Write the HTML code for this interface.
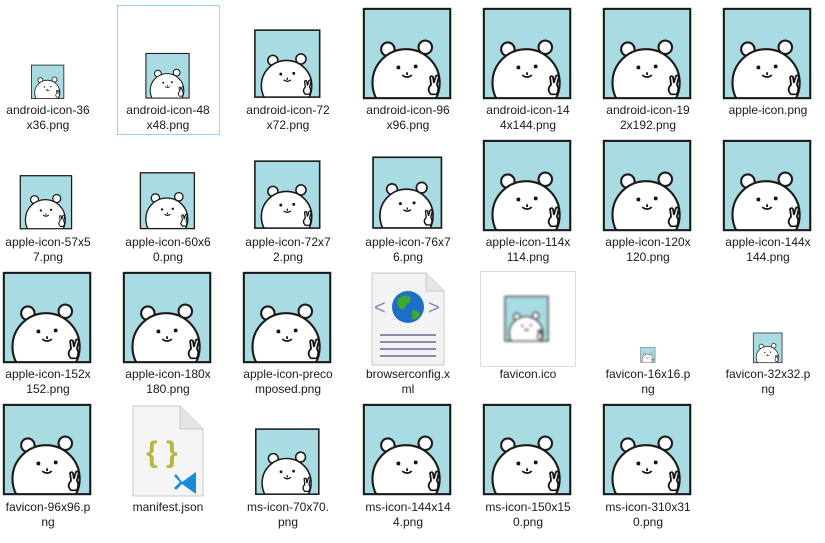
<!DOCTYPE html>
<html><head><meta charset="utf-8"><style>
html,body{margin:0;padding:0;background:#fff;width:825px;height:543px;overflow:hidden;position:relative;font-family:"Liberation Sans",sans-serif;}
.i{position:absolute;}
.l{position:absolute;width:110px;text-align:center;font-size:12px;line-height:15px;color:#1a1a1a;}
.sel{position:absolute;left:117px;top:5px;width:103px;height:130px;border:1px solid #99d1ff;box-sizing:border-box;}
</style></head><body>
<svg width="0" height="0" style="position:absolute">
<defs>
<clipPath id="cp"><rect x="4" y="3" width="90" height="93"/></clipPath>
<symbol id="b" viewBox="0 0 100 100">
<rect x="4" y="3" width="90" height="93" fill="#a8dbe2"/>
<g clip-path="url(#cp)" stroke="#1a1a1a" stroke-width="2.2" fill="#fff">
<circle cx="29" cy="45" r="7"/><circle cx="68" cy="43" r="7"/>
<ellipse cx="48" cy="80" rx="35" ry="35"/>
</g>
<circle cx="40" cy="64" r="2" fill="#111"/><circle cx="58" cy="63" r="2" fill="#111"/>
<path d="M44 72 q5 4 10 0 M49 69 v3" stroke="#111" stroke-width="1.8" fill="none"/>
<path d="M74 92 q-5 -5 0 -10 l-1 -8 q2 -2 3 0 l1 6 l2 -7 q2 -2 3 1 l-2 8 q3 4 0 10 z" fill="#fff" stroke="#111" stroke-width="1.8"/>
<rect x="4" y="3" width="90" height="93" fill="none" stroke="#1a1a1a" stroke-width="2.2"/>
</symbol>
</defs></svg>
<div class="sel"></div>

<!-- row 1 -->
<svg class="i" style="left:30px;top:64px" width="36" height="36"><use href="#b"/></svg>
<svg class="i" style="left:144px;top:52px" width="48" height="48"><use href="#b"/></svg>
<svg class="i" style="left:252px;top:28px" width="72" height="72"><use href="#b"/></svg>
<svg class="i" style="left:360px;top:6px" width="96" height="96"><use href="#b"/></svg>
<svg class="i" style="left:480px;top:6px" width="96" height="96"><use href="#b"/></svg>
<svg class="i" style="left:600px;top:6px" width="96" height="96"><use href="#b"/></svg>
<svg class="i" style="left:720px;top:6px" width="96" height="96"><use href="#b"/></svg>
<div class="l" style="left:-7px;top:103px">android-icon-36<br>x36.png</div>
<div class="l" style="left:113px;top:103px">android-icon-48<br>x48.png</div>
<div class="l" style="left:233px;top:103px">android-icon-72<br>x72.png</div>
<div class="l" style="left:353px;top:103px">android-icon-96<br>x96.png</div>
<div class="l" style="left:473px;top:103px">android-icon-14<br>4x144.png</div>
<div class="l" style="left:593px;top:103px">android-icon-19<br>2x192.png</div>
<div class="l" style="left:713px;top:103px">apple-icon.png</div>

<!-- row 2 -->
<svg class="i" style="left:18px;top:174px" width="57" height="57"><use href="#b"/></svg>
<svg class="i" style="left:138px;top:171px" width="60" height="60"><use href="#b"/></svg>
<svg class="i" style="left:252px;top:159px" width="72" height="72"><use href="#b"/></svg>
<svg class="i" style="left:370px;top:155px" width="76" height="76"><use href="#b"/></svg>
<svg class="i" style="left:480px;top:138px" width="96" height="96"><use href="#b"/></svg>
<svg class="i" style="left:600px;top:138px" width="96" height="96"><use href="#b"/></svg>
<svg class="i" style="left:720px;top:138px" width="96" height="96"><use href="#b"/></svg>
<div class="l" style="left:-7px;top:235px">apple-icon-57x5<br>7.png</div>
<div class="l" style="left:113px;top:235px">apple-icon-60x6<br>0.png</div>
<div class="l" style="left:233px;top:235px">apple-icon-72x7<br>2.png</div>
<div class="l" style="left:353px;top:235px">apple-icon-76x7<br>6.png</div>
<div class="l" style="left:473px;top:235px">apple-icon-114x<br>114.png</div>
<div class="l" style="left:593px;top:235px">apple-icon-120x<br>120.png</div>
<div class="l" style="left:713px;top:235px">apple-icon-144x<br>144.png</div>

<!-- row 3 -->
<svg class="i" style="left:0px;top:270px" width="96" height="96"><use href="#b"/></svg>
<svg class="i" style="left:120px;top:270px" width="96" height="96"><use href="#b"/></svg>
<svg class="i" style="left:240px;top:270px" width="96" height="96"><use href="#b"/></svg>
<svg class="i" style="left:368px;top:271px" width="80" height="96" viewBox="0 0 80 96">
<path d="M4 2 H58 L76 20 V94 H4 Z" fill="#f3f3f3" stroke="#c8c8c8"/>
<path d="M58 2 V20 H76" fill="#e6e6e6" stroke="#c8c8c8"/>
<text x="6" y="43" font-size="20" fill="#8c86b0" font-family="Liberation Sans">&lt;</text>
<text x="60" y="43" font-size="20" fill="#8c86b0" font-family="Liberation Sans">&gt;</text>
<circle cx="40" cy="36" r="16" fill="#1f6fc9"/>
<path d="M30 28 q6 -6 12 -2 q2 6 -4 8 q-2 6 -6 4 q-4 -4 -2 -10 z M44 40 q6 -2 8 4 q-4 6 -8 4 z" fill="#3fa832"/>
<path d="M12 64 H68 M12 71 H68 M12 78 H68 M12 85 H68" stroke="#8e89a8" stroke-width="2"/>
</svg>
<div class="i" style="left:480px;top:271px;width:96px;height:96px;border:1px solid #ddd;box-sizing:border-box;background:#fff"></div>
<svg class="i" style="left:503px;top:295px;filter:blur(1.2px)" width="48" height="48"><use href="#b"/></svg>
<svg class="i" style="left:640px;top:347px" width="16" height="16"><use href="#b"/></svg>
<svg class="i" style="left:752px;top:332px" width="32" height="32"><use href="#b"/></svg>
<div class="l" style="left:-7px;top:367px">apple-icon-152x<br>152.png</div>
<div class="l" style="left:113px;top:367px">apple-icon-180x<br>180.png</div>
<div class="l" style="left:233px;top:367px">apple-icon-preco<br>mposed.png</div>
<div class="l" style="left:353px;top:367px">browserconfig.x<br>ml</div>
<div class="l" style="left:473px;top:367px">favicon.ico</div>
<div class="l" style="left:593px;top:367px">favicon-16x16.p<br>ng</div>
<div class="l" style="left:713px;top:367px">favicon-32x32.p<br>ng</div>

<!-- row 4 -->
<svg class="i" style="left:0px;top:402px" width="96" height="96"><use href="#b"/></svg>
<svg class="i" style="left:130px;top:404px" width="76" height="94" viewBox="0 0 76 94">
<path d="M3 2 H50 L73 25 V92 H3 Z" fill="#f5f5f5" stroke="#c8c8c8"/>
<path d="M50 2 V25 H73" fill="#e4e4e4" stroke="#c8c8c8"/>
<text x="16" y="58" font-size="30" font-weight="bold" fill="#b5b840" font-family="Liberation Sans">{ }</text>
<path d="M52 78 L66 68 V90 L52 80 L46 86 L44 84 L50 78 L44 72 L46 70 Z" fill="#1a8ad8"/>
</svg>
<svg class="i" style="left:253px;top:427px" width="70" height="70"><use href="#b"/></svg>
<svg class="i" style="left:360px;top:402px" width="96" height="96"><use href="#b"/></svg>
<svg class="i" style="left:480px;top:402px" width="96" height="96"><use href="#b"/></svg>
<svg class="i" style="left:600px;top:402px" width="96" height="96"><use href="#b"/></svg>
<div class="l" style="left:-7px;top:500px">favicon-96x96.p<br>ng</div>
<div class="l" style="left:113px;top:500px">manifest.json</div>
<div class="l" style="left:233px;top:500px">ms-icon-70x70.<br>png</div>
<div class="l" style="left:353px;top:500px">ms-icon-144x14<br>4.png</div>
<div class="l" style="left:473px;top:500px">ms-icon-150x15<br>0.png</div>
<div class="l" style="left:593px;top:500px">ms-icon-310x31<br>0.png</div>
</body></html>
